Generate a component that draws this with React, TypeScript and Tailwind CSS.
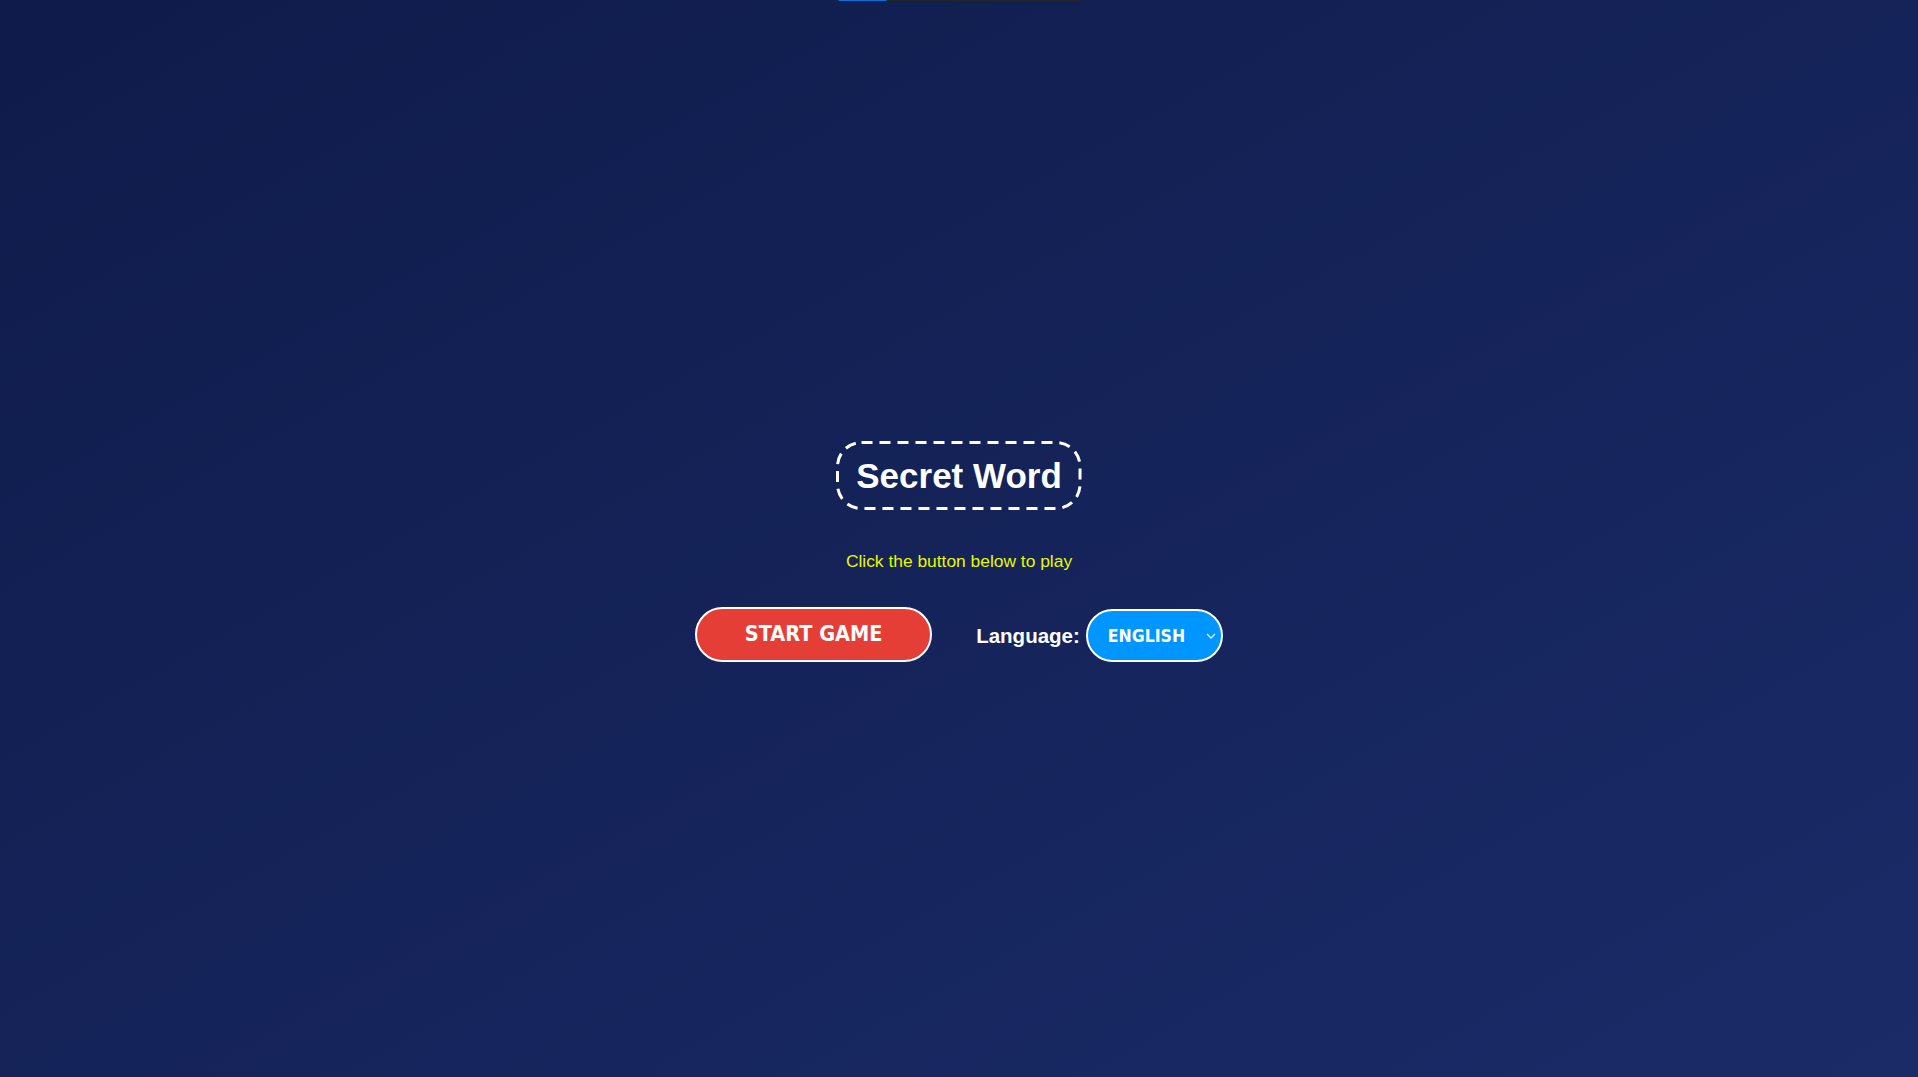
import { useState } from "react";

const tahoma = "font-['DejaVu_Sans_Condensed','DejaVu_Sans',sans-serif] [font-stretch:condensed]";

export default function App() {
  const [lang, setLang] = useState("en");

  return (
    <div className="relative flex min-h-screen w-full flex-col items-center justify-center bg-linear-to-br from-[#0f1b4a] to-[#1a2b68] pt-[26px] font-['Liberation_Sans',Arial,sans-serif]">
      {/* timer bar on top */}
      <div className="absolute left-1/2 top-0 flex h-px w-[241px] -translate-x-1/2 bg-[#222429]">
        <div className="h-full w-[48px] bg-[#0a6fd6]" />
      </div>

      <h1 className="relative px-[20px] py-[15px] text-[35px] font-bold leading-[39px] text-white">
        Secret Word
        <svg className="pointer-events-none absolute inset-0 h-full w-full overflow-visible" fill="none">
          <rect
            x="1.5"
            y="1.5"
            rx="24"
            className="[width:calc(100%-3px)] [height:calc(100%-3px)]"
            stroke="#fff"
            strokeWidth="3"
            strokeDasharray="11 7"
          />
        </svg>
      </h1>

      <p className="mt-[41px] text-[17.4px] leading-[20px] text-[#e8f800]">
        Click the button below to play
      </p>

      <div className="mt-[36px] flex items-center">
        <button
          className={`flex h-[55px] w-[237px] items-center justify-center rounded-full border-2 border-white bg-[#e53e36] text-[21.5px] font-bold text-white ${tahoma}`}
        >
          START GAME
        </button>

        <div className="ml-[44px] flex items-center gap-[6px] pt-[2px]">
          <span className="pt-[2px] text-[20.5px] font-bold text-white">Language:</span>
          <div className="relative">
            <select
              value={lang}
              onChange={(e) => setLang(e.target.value)}
              className={`h-[53px] w-[137px] appearance-none rounded-full border-2 border-white bg-[#0096ff] pl-[20px] pt-[2px] text-[17.5px] font-bold text-white outline-none ${tahoma}`}
            >
              <option value="en">ENGLISH</option>
              <option value="es">ESPAÑOL</option>
            </select>
            <svg
              className="pointer-events-none absolute right-[7px] top-1/2 h-[6px] w-[10px] -translate-y-1/2"
              viewBox="0 0 10 6"
              fill="none"
              stroke="#d6ecff"
              strokeWidth="1.4"
            >
              <path d="M1 1l4 4 4-4" />
            </svg>
          </div>
        </div>
      </div>
    </div>
  );
}
